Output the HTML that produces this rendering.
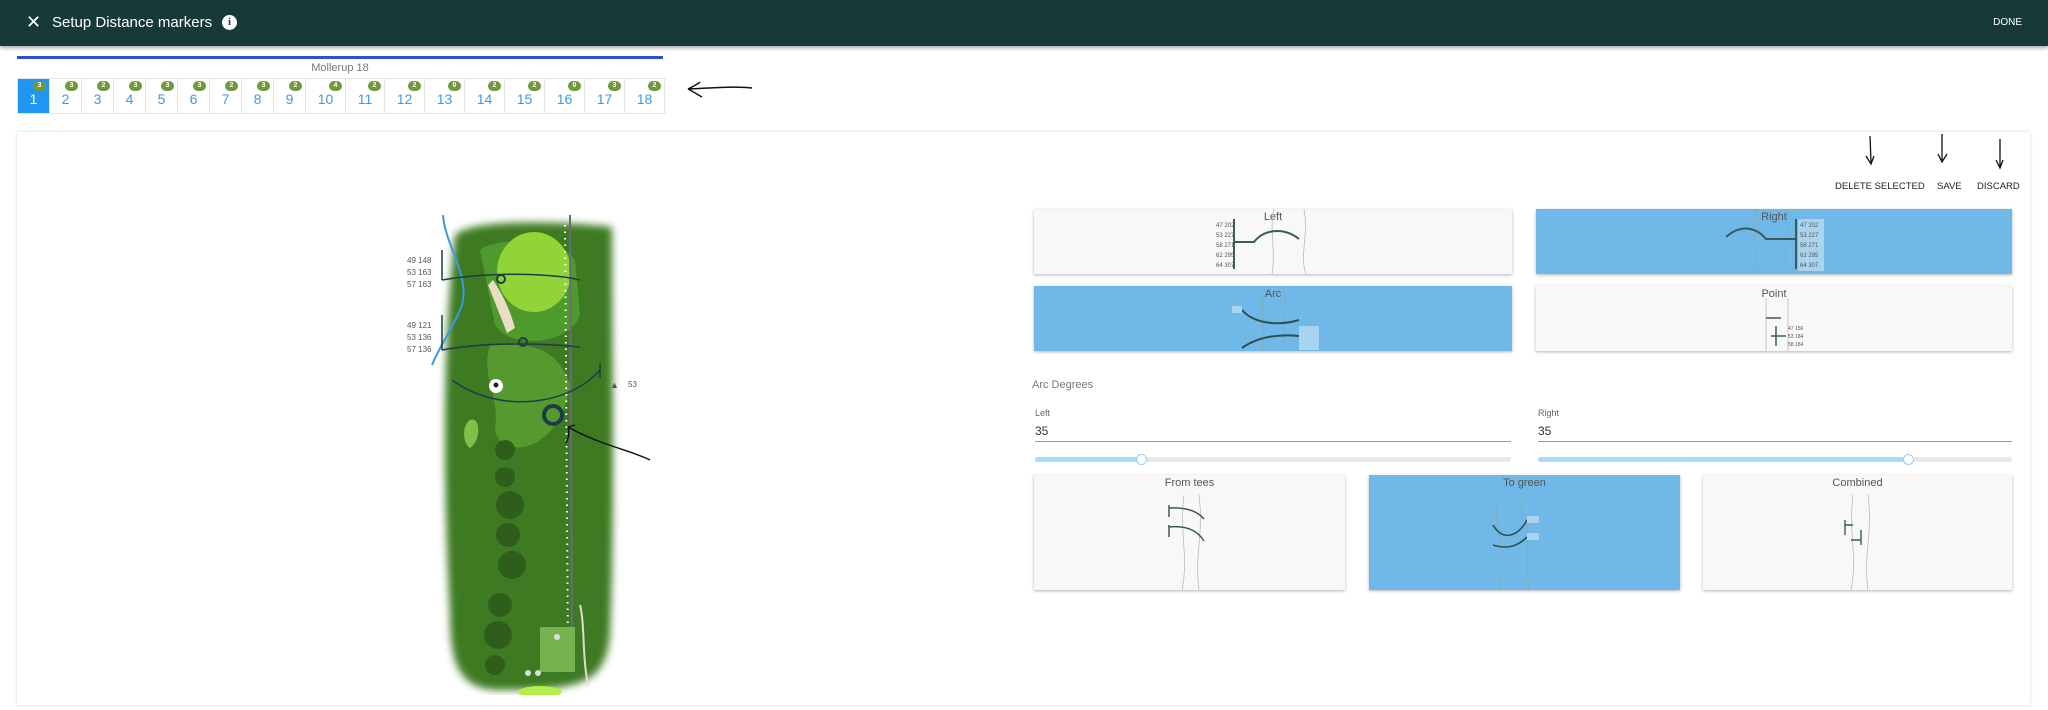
<!DOCTYPE html>
<html><head><meta charset="utf-8"><style>
*{box-sizing:border-box;margin:0;padding:0}
body{width:2048px;height:710px;background:#fff;font-family:"Liberation Sans",sans-serif;position:relative;overflow:hidden}
.hdr{position:absolute;left:0;top:0;width:2048px;height:46px;background:#17393a;box-shadow:0 2px 4px rgba(0,0,0,.35);color:#fff}
.hdr .x{position:absolute;left:26px;top:12px;font-size:18px}
.hdr .t{position:absolute;left:52px;top:14px;font-size:15px}
.hdr .i{position:absolute;left:222px;top:15px;width:15px;height:15px;border-radius:50%;background:#fff;color:#17393a;font-size:11px;font-weight:bold;text-align:center;line-height:15px;font-family:"Liberation Serif",serif}
.hdr .d{position:absolute;right:26px;top:17px;font-size:10px}
.bl{position:absolute;left:17px;top:56px;width:646px;height:3px;background:#2f4fd8}
.cn{position:absolute;left:17px;top:62px;width:646px;text-align:center;font-size:11px;color:#777}
.tabs{position:absolute;left:17px;top:78px;height:36px;display:flex;border:1px solid #e3e3e3}
.tab{position:relative;height:34px;border-right:1px solid #e6e6e6;color:#3a9be8;font-size:14px;text-align:center;padding-top:12px}
.tab.a{background:#2196f3;color:#fff}
.tab b{position:absolute;right:3px;top:2px;width:13px;height:10px;border-radius:6px;background:#6f9a3a;color:#fff;font-size:7px;line-height:10px;font-weight:bold}
.card{position:absolute;left:17px;top:132px;width:2013px;height:573px;box-shadow:0 0 3px rgba(0,0,0,.18);background:#fff}
.btn{position:absolute;top:181px;font-size:9.5px;color:#222}
.mc{position:absolute;background:#f8f8f8;box-shadow:0 1px 3px rgba(0,0,0,.3);text-align:center;font-size:11px;color:#555;overflow:hidden}
.mc.s{background:#70b8e8}
.mc span{position:relative;top:2px}
.lab{position:absolute;font-size:9px;color:#666}
.val{position:absolute;font-size:12px;color:#333}
.ul{position:absolute;height:1px;background:#999}
.tr{position:absolute;height:5px;border-radius:3px;background:#e8e8e8}
.tf{position:absolute;height:5px;border-radius:3px;background:#a9dcf8}
.th{position:absolute;width:11px;height:11px;border-radius:50%;border:1px solid #90d0f4;background:#fff}
</style></head><body>
<div class="hdr"><span class="x">✕</span><span class="t">Setup Distance markers</span><span class="i">i</span><span class="d">DONE</span></div>
<div class="bl"></div>
<div class="cn">Mollerup 18</div>
<div class="tabs">
<div class="tab a" style="width:32px">1<b>3</b></div>
<div class="tab" style="width:32px">2<b>3</b></div>
<div class="tab" style="width:32px">3<b>2</b></div>
<div class="tab" style="width:32px">4<b>3</b></div>
<div class="tab" style="width:32px">5<b>3</b></div>
<div class="tab" style="width:32px">6<b>3</b></div>
<div class="tab" style="width:32px">7<b>2</b></div>
<div class="tab" style="width:32px">8<b>3</b></div>
<div class="tab" style="width:32px">9<b>2</b></div>
<div class="tab" style="width:40px">10<b>4</b></div>
<div class="tab" style="width:39px">11<b>2</b></div>
<div class="tab" style="width:40px">12<b>2</b></div>
<div class="tab" style="width:40px">13<b>0</b></div>
<div class="tab" style="width:40px">14<b>2</b></div>
<div class="tab" style="width:40px">15<b>2</b></div>
<div class="tab" style="width:40px">16<b>0</b></div>
<div class="tab" style="width:40px">17<b>3</b></div>
<div class="tab" style="width:39px;border-right:0">18<b>2</b></div>
</div>
<svg style="position:absolute;left:680px;top:80px" width="80" height="20"><path d="M72 8 C55 6 30 8 8 9 M8 9 C14 6 18 4 20 2 M8 9 C14 12 18 15 22 17" stroke="#111" stroke-width="1.5" fill="none"/></svg>
<div class="card"></div>
<svg style="position:absolute;left:1820px;top:132px" width="210" height="40" fill="none" stroke="#111" stroke-width="1.3"><path d="M50 4 L51 30 M46 24 L51 32 L54 24 M122 2 L122 28 M118 22 L122 30 L127 22 M180 7 L180 34 M176 28 L180 36 L183 28"/></svg>
<div class="btn" style="left:1835px">DELETE SELECTED</div>
<div class="btn" style="left:1937px">SAVE</div>
<div class="btn" style="left:1977px">DISCARD</div>

<div class="mc" style="left:1034px;top:209px;width:478px;height:65px"><span>Left</span>
<svg style="position:absolute;left:180px;top:0" width="120" height="65" fill="none"><path d="M60 0 C55 20 62 40 58 65 M90 0 C95 30 85 45 92 65" stroke="#bbb" stroke-width=".8"/><path d="M20 10 V60 M20 33 H40 C50 20 70 18 85 30" stroke="#3b5a5a" stroke-width="2"/><g font-size="6" fill="#555"><text x="2" y="18">47 202</text><text x="2" y="28">53 227</text><text x="2" y="38">58 271</text><text x="2" y="48">62 295</text><text x="2" y="58">64 307</text></g></svg></div>
<div class="mc s" style="left:1536px;top:209px;width:476px;height:65px"><span>Right</span>
<svg style="position:absolute;left:180px;top:0" width="140" height="65" fill="none"><path d="M40 0 C35 20 42 40 38 65 M70 0 C75 30 65 45 72 65" stroke="#8aa" stroke-width=".8"/><path d="M10 28 C25 15 40 18 50 30 H80 M80 10 V60" stroke="#3b5a5a" stroke-width="2"/><rect x="82" y="10" width="26" height="52" fill="#a8d4f0"/><g font-size="6" fill="#555"><text x="84" y="18">47 202</text><text x="84" y="28">53 227</text><text x="84" y="38">58 271</text><text x="84" y="48">62 295</text><text x="84" y="58">64 307</text></g></svg></div>
<div class="mc s" style="left:1034px;top:286px;width:478px;height:65px"><span>Arc</span>
<svg style="position:absolute;left:190px;top:0" width="120" height="65" fill="none"><path d="M40 5 C35 30 42 40 38 65 M60 5 C65 30 55 45 62 65" stroke="#8aa" stroke-width=".8"/><path d="M18 24 C30 38 55 40 75 34 M18 62 C35 50 55 48 75 50" stroke="#2f4f4f" stroke-width="2"/><rect x="8" y="20" width="10" height="7" fill="#a8d4f0"/><rect x="75" y="40" width="20" height="24" fill="#a8d4f0"/></svg></div>
<div class="mc" style="left:1536px;top:286px;width:476px;height:65px"><span>Point</span>
<svg style="position:absolute;left:190px;top:0" width="120" height="65" fill="none"><path d="M40 12 V65 M62 12 V65" stroke="#bbb" stroke-width=".8"/><path d="M40 32 H55 M50 40 V60 M45 50 H60" stroke="#3b5a5a" stroke-width="1.5"/><g font-size="5" fill="#555"><text x="62" y="44">47 156</text><text x="62" y="52">53 184</text><text x="62" y="60">58 184</text></g></svg></div>

<div class="lab" style="left:1032px;top:379px;font-size:11px;color:#777">Arc Degrees</div>
<div class="lab" style="left:1035px;top:408px">Left</div>
<div class="val" style="left:1035px;top:424px">35</div>
<div class="ul" style="left:1035px;top:441px;width:476px"></div>
<div class="lab" style="left:1538px;top:408px">Right</div>
<div class="val" style="left:1538px;top:424px">35</div>
<div class="ul" style="left:1538px;top:441px;width:474px"></div>
<div class="tr" style="left:1035px;top:457px;width:476px"></div>
<div class="tf" style="left:1035px;top:457px;width:106px"></div>
<div class="th" style="left:1136px;top:454px"></div>
<div class="tr" style="left:1538px;top:457px;width:474px"></div>
<div class="tf" style="left:1538px;top:457px;width:370px"></div>
<div class="th" style="left:1903px;top:454px"></div>

<div class="mc" style="left:1034px;top:475px;width:311px;height:115px"><span>From tees</span>
<svg style="position:absolute;left:120px;top:0" width="80" height="115" fill="none"><path d="M30 20 C25 60 35 80 28 115 M45 20 C50 60 40 80 45 115" stroke="#bbb" stroke-width=".8"/><path d="M15 30 V42 M15 33 C35 32 45 38 50 44 M15 50 V62 M15 52 C35 50 45 58 50 66" stroke="#3b5a5a" stroke-width="1.5"/></svg></div>
<div class="mc s" style="left:1369px;top:475px;width:311px;height:115px"><span>To green</span>
<svg style="position:absolute;left:110px;top:0" width="90" height="115" fill="none"><path d="M20 25 C10 50 30 60 20 115 M40 25 C55 60 45 80 50 115" stroke="#8aa" stroke-width=".8"/><path d="M14 50 C25 68 40 60 48 45 M14 70 C30 75 40 70 48 62" stroke="#2f4f4f" stroke-width="1.6"/><rect x="48" y="41" width="12" height="7" fill="#a8d4f0"/><rect x="48" y="58" width="12" height="7" fill="#a8d4f0"/></svg></div>
<div class="mc" style="left:1703px;top:475px;width:309px;height:115px"><span>Combined</span>
<svg style="position:absolute;left:120px;top:0" width="80" height="115" fill="none"><path d="M30 20 C25 60 35 80 28 115 M45 20 C50 60 40 80 45 115" stroke="#bbb" stroke-width=".8"/><path d="M22 45 V60 M22 50 H30 M38 55 V70 M28 65 H38" stroke="#3b5a5a" stroke-width="1.4"/></svg></div>

<svg style="position:absolute;left:400px;top:215px" width="260" height="480">
<defs><filter id="b"><feGaussianBlur stdDeviation="4"/></filter></defs>
<path d="M55 20 C70 5 150 5 212 12 C212 150 215 300 210 420 C205 470 180 475 100 475 C60 475 50 450 50 400 C45 300 40 150 55 20 Z" fill="#3d7a22" filter="url(#b)"/>
<path d="M80 35 C100 20 160 25 175 45 L180 100 C170 130 110 135 95 110 Z" fill="#4f9a2c"/>
<ellipse cx="134" cy="57" rx="37" ry="40" fill="#92d438"/>
<path d="M93 65 C103 80 110 95 115 113 L107 118 C100 100 94 85 88 70 Z" fill="#eadcc5"/>
<path d="M90 130 C140 125 160 140 170 170 C160 240 100 245 95 215 C100 180 80 160 90 130 Z" fill="#55992f"/>
<path d="M43 0 C45 30 70 60 62 90 C55 110 40 130 32 150" stroke="#3d9ad8" stroke-width="2" fill="none"/>
<path d="M170 0 L172 450" stroke="#6b6b80" stroke-width="2"/>
<path d="M165 10 L168 440" stroke="#fff" stroke-width="2" stroke-dasharray="1.5 5"/>
<path d="M42 35 V65 M42 65 C100 55 160 60 180 65 M42 100 V135 M42 135 C100 125 160 130 180 132 M52 165 C100 200 170 190 200 155 M200 148 V163" stroke="#1e3c48" stroke-width="1.5" fill="none"/>
<circle cx="101" cy="64" r="4" fill="none" stroke="#1e3c48" stroke-width="2"/>
<circle cx="123" cy="127" r="4" fill="none" stroke="#1e3c48" stroke-width="2"/>
<circle cx="153" cy="200" r="9" fill="none" stroke="#1e3c48" stroke-width="4"/>
<circle cx="96" cy="171" r="7" fill="#fff"/><circle cx="96" cy="170" r="2.5" fill="#222"/>
<path d="M70 205 C80 200 82 225 70 233 C62 228 62 210 70 205 Z" fill="#7fbf4a"/>
<g fill="#2f5e1c"><circle cx="105" cy="235" r="10"/><circle cx="105" cy="262" r="10"/><circle cx="110" cy="290" r="14"/><circle cx="108" cy="320" r="12"/><circle cx="112" cy="350" r="14"/><circle cx="100" cy="390" r="12"/><circle cx="98" cy="420" r="14"/><circle cx="95" cy="450" r="10"/></g>
<rect x="140" y="412" width="35" height="45" fill="#74b34f"/>
<path d="M180 390 C185 410 182 440 188 470" stroke="#e5dac8" stroke-width="2" fill="none"/>
<ellipse cx="140" cy="477" rx="22" ry="6" fill="#b4ee4a"/>
<circle cx="157" cy="422" r="3" fill="#ddd"/><circle cx="128" cy="458" r="3" fill="#ddd"/><circle cx="138" cy="458" r="3" fill="#ddd"/>
<g font-size="8" fill="#555" font-family="Liberation Sans"><text x="7" y="48">49 148</text><text x="7" y="60">53 163</text><text x="7" y="72">57 163</text><text x="7" y="113">49 121</text><text x="7" y="125">53 136</text><text x="7" y="137">57 136</text><text x="228" y="172">53</text><text x="210" y="173" font-size="9">▲</text></g>
<path d="M250 245 C230 235 200 230 168 212 M168 212 C170 218 168 224 166 228 M168 212 L175 210" stroke="#111" stroke-width="1.4" fill="none"/>
</svg>
</body></html>
